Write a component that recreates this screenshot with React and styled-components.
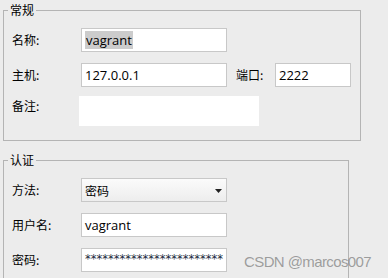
import React from 'react';
import styled, { createGlobalStyle } from 'styled-components';

const GlobalStyle = createGlobalStyle`
  html, body {
    margin: 0;
    background: #ececec;
  }
  body {
    font-family: "Noto Sans CJK SC", "Noto Sans", sans-serif;
    font-size: 12px;
    color: #000;
  }
`;

const Page = styled.div`
  position: relative;
  width: 388px;
  height: 278px;
  overflow: hidden;
  padding: 2px 0 0 3px;
  box-sizing: border-box;
`;

const Group = styled.fieldset`
  box-sizing: border-box;
  width: ${(p) => p.width}px;
  margin: 0 0 ${(p) => p.gap || 0}px 0;
  padding: 0 0 ${(p) => p.bottom || 0}px 4px;
  border: 1px solid #b4b4b4;
  min-width: 0;
`;

const Legend = styled.legend`
  padding: 0 2px;
  font-size: 12px;
  line-height: 16px;
  height: 16px;
`;

const Body = styled.div`
  display: flex;
  flex-direction: column;
  gap: 11px;
  padding: 10px 0 0 4px;
`;

const Row = styled.div`
  display: flex;
  align-items: ${(p) => (p.top ? 'flex-start' : 'center')};
  margin-top: ${(p) => p.shift || 0}px;
`;

const Label = styled.span`
  width: ${(p) => p.width || 69}px;
  flex: none;
  line-height: 16px;
  padding-top: ${(p) => p.pad || 0}px;
`;

const Input = styled.div`
  box-sizing: border-box;
  width: ${(p) => p.width || 146}px;
  height: 24px;
  background: #fff;
  border: 1px solid #c8c8c8;
  display: flex;
  align-items: center;
  padding-left: 3px;
  font-family: "Open Sans", "Noto Sans", sans-serif;
  font-size: 13px;
  white-space: nowrap;
  overflow: hidden;
  flex: none;
`;

const Selected = styled.span`
  background: #cccccc;
  line-height: 18px;
  padding: 0 1px;
`;

const Memo = styled.div`
  width: 180px;
  height: 30px;
  background: #fff;
  margin-left: -2px;
`;

const Combo = styled(Input)`
  background: linear-gradient(#fbfbfb, #ededed);
  justify-content: space-between;
  padding-right: 4px;
  font-family: "Noto Sans CJK SC", sans-serif;
  font-size: 12px;
`;

const Arrow = styled.svg`
  width: 7px;
  height: 4px;
  margin-top: 1px;
`;

const Stars = styled.span`
  font-family: "DejaVu Sans", sans-serif;
  font-size: 11.5px;
  line-height: 14px;
  margin-top: -3px;
  color: #1a2a40;
`;

const Port = styled.span`
  margin-left: 9px;
  width: 39px;
  line-height: 16px;
`;

const Watermark = styled.div`
  position: absolute;
  left: 244px;
  top: 253px;
  font-family: "Liberation Sans", Arial, sans-serif;
  font-size: 15px;
  letter-spacing: -0.6px;
  color: rgba(125, 125, 125, 0.72);
  white-space: nowrap;
`;

export default function App() {
  return (
    <>
      <GlobalStyle />
      <Page>
        <Group width={358} bottom={14} gap={11}>
          <Legend>常规</Legend>
          <Body>
            <Row>
              <Label>名称:</Label>
              <Input>
                <Selected>vagrant</Selected>
              </Input>
            </Row>
            <Row>
              <Label>主机:</Label>
              <Input>127.0.0.1</Input>
              <Port>端口:</Port>
              <Input width={76}>2222</Input>
            </Row>
            <Row top shift={-2}>
              <Label pad={2}>备注:</Label>
              <Memo />
            </Row>
          </Body>
        </Group>
        <Group width={346} bottom={20}>
          <Legend>认证</Legend>
          <Body>
            <Row>
              <Label>方法:</Label>
              <Combo>
                <span>密码</span>
                <Arrow viewBox="0 0 7 4">
                  <path d="M0 0H7L3.5 4Z" fill="#222" />
                </Arrow>
              </Combo>
            </Row>
            <Row>
              <Label>用户名:</Label>
              <Input>vagrant</Input>
            </Row>
            <Row>
              <Label>密码:</Label>
              <Input>
                <Stars>{'*'.repeat(24)}</Stars>
              </Input>
            </Row>
          </Body>
        </Group>
        <Watermark>CSDN @marcos007</Watermark>
      </Page>
    </>
  );
}
